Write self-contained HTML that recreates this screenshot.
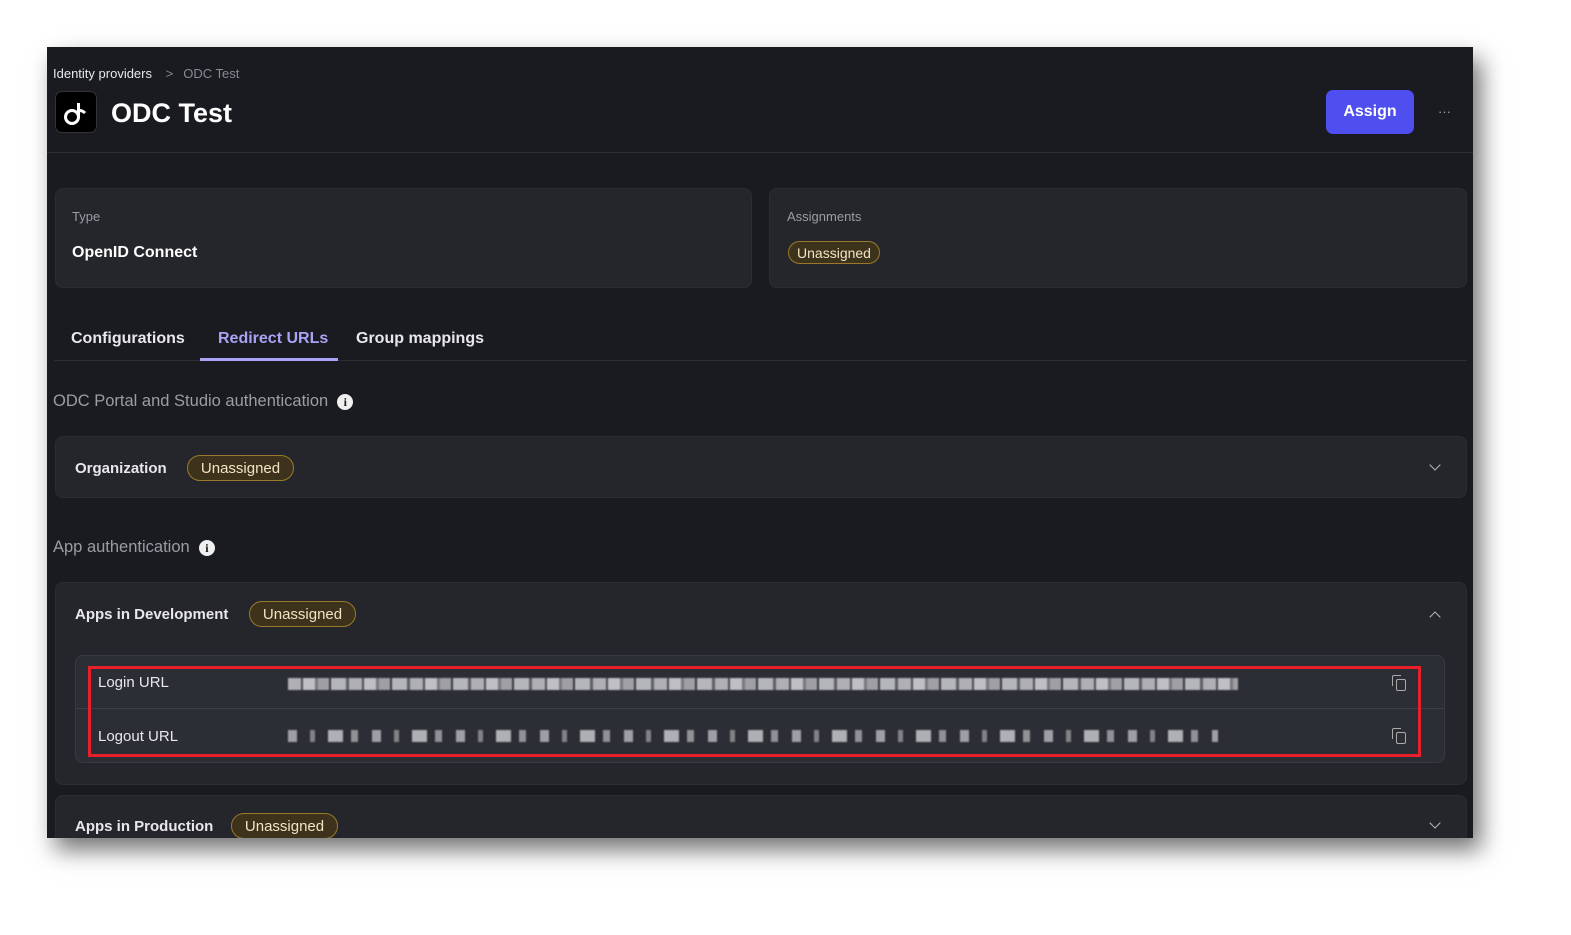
<!DOCTYPE html>
<html><head><meta charset="utf-8"><style>
*{margin:0;padding:0;box-sizing:border-box}
body{width:1571px;height:935px;background:#fff;position:relative;overflow:hidden;font-family:"Liberation Sans",sans-serif;color:#e8e8ec}
#shot{position:absolute;left:47px;top:47px;width:1426px;height:791px;background:#1a1b20;overflow:hidden;box-shadow:8px 12px 22px rgba(0,0,0,.55)}
.a{position:absolute}
.card{background:#25262c;border-radius:8px;border:1px solid #2c2d33}
.badge{position:absolute;border:1px solid #9a7a2a;background:#3d321b;color:#f1e4c4;border-radius:14px;font-size:15px;display:flex;align-items:center;justify-content:center}
.lbl{font-size:13px;color:#9c9ca3}
.b{font-weight:bold}
.info{display:inline-block;width:16px;height:16px;border-radius:50%;background:#f0f0f0;color:#1a1b20;font-size:12px;font-weight:bold;text-align:center;line-height:16px;font-family:"Liberation Serif",serif;vertical-align:middle}
.blur{position:absolute;height:12px;background:repeating-linear-gradient(90deg,#d0d0d4 0 13px,#55565d 13px 15px,#e4e4e8 15px 27px,#8b8c92 27px 30px,#bcbcc0 30px 41px,#3a3b41 41px 43px,#d8d8dc 43px 58px,#6a6b70 58px 61px);opacity:.8;filter:blur(.8px)}
.blur2{background:repeating-linear-gradient(90deg,#bcbcc0 0 9px,#2c2e36 9px 22px,#999 22px 27px,#2c2e36 27px 40px,#d0d0d4 40px 55px,#2c2e36 55px 63px,#aaa 63px 70px,#2c2e36 70px 84px)}
.copy{position:absolute;width:10px;height:12px;border:1.6px solid #aaa;border-radius:2px}
.copy:before{content:"";position:absolute;left:-5px;top:-5px;width:8px;height:10px;border-left:1.6px solid #aaa;border-top:1.6px solid #aaa;border-radius:2px 0 0 0}
.chev{position:absolute;width:8px;height:8px;border-right:1.6px solid #bbb;border-bottom:1.6px solid #bbb}
.g{font-size:16.5px;color:#9c9ca3}
</style></head><body>
<div id="shot">
<div class="a" style="left:6px;top:19px;font-size:13px;color:#e8e8ec">Identity providers <span style="color:#888;margin:0 10px">&gt;</span><span style="color:#8a8a92">ODC Test</span></div>
<div class="a" style="left:8px;top:44px;width:42px;height:42px;background:#000;border-radius:7px;border:1px solid #333">
<svg width="42" height="42" viewBox="0 0 42 42"><circle cx="16" cy="25" r="6.5" fill="none" stroke="#fff" stroke-width="3"/><path d="M22.5 26V11M22.5 19C25 18 27 19 29 21" fill="none" stroke="#fff" stroke-width="3"/></svg></div>
<div class="a b" style="left:64px;top:51px;font-size:27px;color:#fff">ODC Test</div>
<div class="a b" style="left:1279px;top:43px;width:88px;height:44px;background:#4f4ff0;border-radius:7px;color:#fff;font-size:16px;display:flex;align-items:center;justify-content:center">Assign</div>
<div class="a" style="left:1391px;top:57px;color:#aaa;font-size:13px">···</div>
<div class="a" style="left:0;top:105px;width:1426px;height:1px;background:#2c2d33"></div>

<div class="a card" style="left:8px;top:141px;width:697px;height:100px"></div>
<div class="a lbl" style="left:25px;top:162px">Type</div>
<div class="a b" style="left:25px;top:197px;font-size:16px;color:#fff">OpenID Connect</div>
<div class="a card" style="left:722px;top:141px;width:698px;height:100px"></div>
<div class="a lbl" style="left:740px;top:162px">Assignments</div>
<div class="badge" style="left:741px;top:194px;width:92px;height:23px;font-size:14px">Unassigned</div>

<div class="a b" style="left:24px;top:283px;font-size:16px">Configurations</div>
<div class="a b" style="left:171px;top:283px;font-size:16px;color:#a9a3f5">Redirect URLs</div>
<div class="a b" style="left:309px;top:283px;font-size:16px">Group mappings</div>
<div class="a" style="left:7px;top:313px;width:1413px;height:1px;background:#2e2f35"></div>
<div class="a" style="left:153px;top:311px;width:138px;height:3px;background:#a9a3f5"></div>

<div class="a g" style="left:6px;top:345px">ODC Portal and Studio authentication &nbsp;<span class="info">i</span></div>
<div class="a card" style="left:8px;top:389px;width:1412px;height:62px"></div>
<div class="a b" style="left:28px;top:413px;font-size:15px">Organization</div>
<div class="badge" style="left:140px;top:408px;width:107px;height:26px">Unassigned</div>
<div class="chev" style="left:1384px;top:414px;transform:rotate(45deg)"></div>

<div class="a g" style="left:6px;top:491px">App authentication &nbsp;<span class="info">i</span></div>
<div class="a card" style="left:8px;top:535px;width:1412px;height:203px"></div>
<div class="a b" style="left:28px;top:559px;font-size:15px">Apps in Development</div>
<div class="badge" style="left:202px;top:554px;width:107px;height:26px">Unassigned</div>
<div class="chev" style="left:1384px;top:566px;transform:rotate(225deg)"></div>
<div class="a" style="left:28px;top:608px;width:1370px;height:108px;background:#2c2e36;border:1px solid #383a42;border-radius:8px"></div>
<div class="a" style="left:28px;top:661px;width:1370px;height:1px;background:#3c3e46"></div>
<div class="a" style="left:51px;top:627px;font-size:15px">Login URL</div>
<div class="a" style="left:51px;top:681px;font-size:15px">Logout URL</div>
<div class="blur" style="left:241px;top:631px;width:950px"></div>
<div class="blur blur2" style="left:241px;top:683px;width:930px"></div>
<div class="copy" style="left:1349px;top:632px"></div>
<div class="copy" style="left:1349px;top:685px"></div>
<div class="a" style="left:41px;top:619px;width:1333px;height:91px;border:3px solid #e8202a"></div>

<div class="a card" style="left:8px;top:748px;width:1412px;height:80px"></div>
<div class="a b" style="left:28px;top:771px;font-size:15px">Apps in Production</div>
<div class="badge" style="left:184px;top:766px;width:107px;height:26px">Unassigned</div>
<div class="chev" style="left:1384px;top:772px;transform:rotate(45deg)"></div>
</div>
</body></html>
